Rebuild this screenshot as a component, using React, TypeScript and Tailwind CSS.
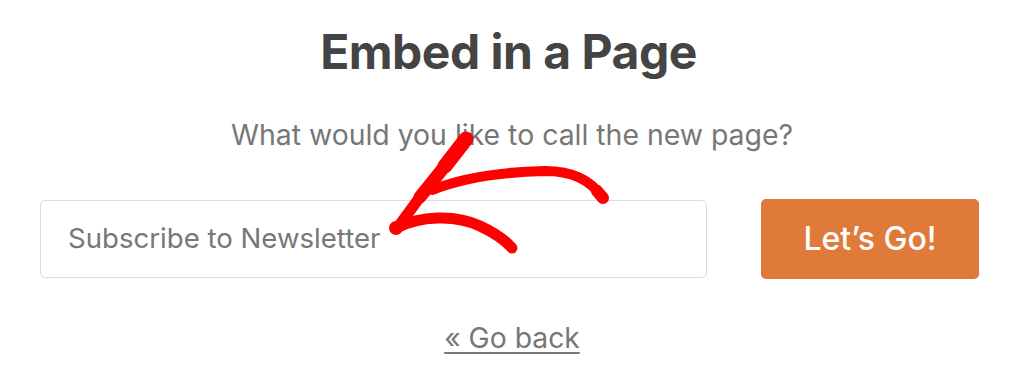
import React from "react";

export default function App() {
  return (
    <div
      className="relative w-[1024px] h-[382px] bg-white flex flex-col items-center overflow-hidden"
      style={{ fontFamily: "Inter, 'Noto Sans', sans-serif" }}
    >
      <h1 className="mt-[23px] pr-[7px] text-[48px] leading-[58px] font-bold text-[#444444] tracking-[-0.5px]">
        Embed in a Page
      </h1>
      <p className="mt-[37px] text-[28.4px] leading-[34px] text-[#777777]">
        What would you like to call the new page?
      </p>
      <div className="mt-[47px] w-full flex items-center pl-[40px]">
        <div className="w-[667px] h-[78px] border-[1.5px] border-[#dcdcdc] rounded-[5px] flex items-center pl-[27px]">
          <span className="text-[27.6px] text-[#777777]">Subscribe to Newsletter</span>
        </div>
        <button className="ml-[54px] w-[218px] h-[80px] bg-[#df7a3a] rounded-[5px] text-white text-[32px] font-medium flex items-center justify-center">
          Let’s Go!
        </button>
      </div>
      <a className="mt-[42px] text-[28.3px] leading-[34px] text-[#777777] underline underline-offset-[4px] decoration-[1.5px]">
        « Go back
      </a>
      <svg
        className="absolute left-0 top-0 pointer-events-none"
        width="1024"
        height="382"
        viewBox="0 0 1024 382"
      >
        <g stroke="#fe0000" fill="none" strokeLinecap="round" strokeLinejoin="round">
          <path d="M466 139 L445 166" strokeWidth="15" />
          <path d="M445 166 L420 197" strokeWidth="13" />
          <path d="M420 197 L398 227" strokeWidth="11" />
          <path d="M432 190 C462 178 500 172 545 171 C575 171 592 182 602 197" strokeWidth="10" />
          <path d="M597 191 L603 198" strokeWidth="12" />
          <path d="M396 228 C420 216 455 214 480 226 C495 233 505 240 512 248" strokeWidth="11" />
          <circle cx="396" cy="228" r="7" fill="#fe0000" stroke="none" />
        </g>
      </svg>
    </div>
  );
}
